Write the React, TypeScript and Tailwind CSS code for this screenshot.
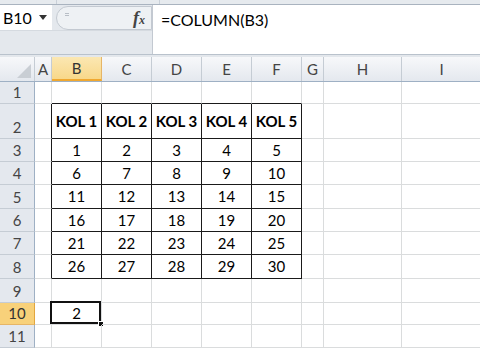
import React from 'react';

const COLS = [
  { name: '', w: 35 },
  { name: 'A', w: 17 },
  { name: 'B', w: 50 },
  { name: 'C', w: 50 },
  { name: 'D', w: 50 },
  { name: 'E', w: 50 },
  { name: 'F', w: 50 },
  { name: 'G', w: 22 },
  { name: 'H', w: 78 },
  { name: 'I', w: 80 },
];

const ROW_H = [22, 35, 23, 23, 24, 23, 23, 24, 24, 22, 23];

const DATA: string[][] = [
  [],
  ['KOL 1', 'KOL 2', 'KOL 3', 'KOL 4', 'KOL 5'],
  ['1', '2', '3', '4', '5'],
  ['6', '7', '8', '9', '10'],
  ['11', '12', '13', '14', '15'],
  ['16', '17', '18', '19', '20'],
  ['21', '22', '23', '24', '25'],
  ['26', '27', '28', '29', '30'],
];

const inTable = (r: number, c: number) => r >= 2 && r <= 8 && c >= 2 && c <= 6;

const Cell: React.FC<{ r: number; c: number; w: number }> = ({ r, c, w }) => {
  const table = inTable(r, c);
  const rightDark = table || (c === 1 && r >= 2 && r <= 8);
  const bottomDark = table || (r === 1 && c >= 2 && c <= 6);
  const text = table ? DATA[r - 1][c - 2] : r === 10 && c === 2 ? '2' : '';
  const selected = r === 10 && c === 2;
  return (
    <div
      className={`relative flex shrink-0 items-center justify-center border-r border-b text-[15px] text-black ${
        rightDark ? 'border-r-[#1a1a1a]' : 'border-r-[#dadcdd]'
      } ${bottomDark ? 'border-b-[#1a1a1a]' : 'border-b-[#dadcdd]'} ${r === 2 ? 'font-bold' : ''}`}
      style={{ width: w }}
    >
      {text}
      {selected && (
        <>
          <div className="absolute -left-[2px] -top-[2px] right-0 bottom-0 border-[2px] border-[#111]" />
          <div className="absolute -right-[3px] -bottom-[3px] h-[6px] w-[6px] border border-white bg-[#111]" />
        </>
      )}
    </div>
  );
};

export default function App() {
  return (
    <div
      className="w-[480px] h-[351px] overflow-hidden bg-white"
      style={{ fontFamily: 'Lato, "Open Sans", sans-serif' }}
    >
      <div className="flex h-[5px] border-b border-[#a9b3bf] bg-[#e6eaee]">
        <div className="w-[57px] border-r border-[#c9d0d8]" />
        <div className="w-[103px] border-r border-[#c9d0d8]" />
        <div className="flex-1" />
      </div>
      <div className="flex h-[49px]">
        <div className="flex w-[152px] flex-col bg-[#e4e8ed]">
          <div className="flex h-[25px] items-center">
            <div className="flex h-full w-[52px] items-center justify-between bg-white pl-[3px] pr-[5px] text-[16px] text-black">
              <span>B10</span>
              <svg width="8" height="5" viewBox="0 0 8 5">
                <path d="M0 0h8L4 5z" fill="#333" />
              </svg>
            </div>
            <div className="ml-[4px] flex h-[24px] w-[96px] items-center justify-between rounded-l-full border border-[#c3c9d1] bg-[#eef1f4] pl-[8px] pr-[6px]">
              <span className="mb-[6px] h-[3px] w-[4px] border-t border-b border-[#b8bec6]" />
              <span
                className="text-[18px] font-bold italic leading-none text-[#444]"
                style={{ fontFamily: '"Liberation Serif", serif' }}
              >
                f<span className="text-[12px]">x</span>
              </span>
            </div>
          </div>
          <div className="flex-1 border-t border-[#d5dae0]" />
        </div>
        <div className="flex-1 border-l border-[#c3c9d1] bg-white pl-[8px] pt-[3px] text-[16px] text-black">
          =COLUMN(B3)
        </div>
      </div>
      <div className="h-[3px] border-t border-[#b9c2cc] bg-[#e3e7ec]" />
      <div className="flex h-[25px] border-b border-[#9eb0c4] bg-gradient-to-b from-[#f7f8fa] to-[#e4e8ee]">
        {COLS.map((col, i) =>
          i === 0 ? (
            <div key={i} className="relative shrink-0 border-r border-[#c5ccd4]" style={{ width: col.w }}>
              <svg className="absolute right-[3px] bottom-[3px]" width="14" height="14" viewBox="0 0 14 14">
                <path d="M14 0V14H0z" fill="#c9ced4" />
              </svg>
            </div>
          ) : (
            <div
              key={i}
              className={`flex shrink-0 items-center justify-center border-r text-[15px] ${
                col.name === 'B'
                  ? 'border-r-[#e6b566] border-b-2 border-b-[#f0a830] bg-gradient-to-b from-[#fbe7b2] to-[#f8d88a] text-[#333]'
                  : 'border-r-[#c5ccd4] text-[#444]'
              }`}
              style={{ width: col.w }}
            >
              {col.name}
            </div>
          )
        )}
      </div>
      {ROW_H.map((h, ri) => {
        const r = ri + 1;
        return (
          <div key={r} className="flex" style={{ height: h }}>
            <div
              className={`flex shrink-0 items-end justify-center border-r border-b pb-[1px] text-[15px] leading-[20px] ${
                r === 10
                  ? 'border-r-[#e2a63e] border-b-[#e6b566] bg-[#f8d17a] text-[#333]'
                  : 'border-r-[#9eb0c4] border-b-[#c5ccd4] bg-[#e4e8ee] text-[#444]'
              }`}
              style={{ width: 35 }}
            >
              {r}
            </div>
            {COLS.slice(1).map((col, ci) => (
              <Cell key={ci} r={r} c={ci + 1} w={col.w} />
            ))}
          </div>
        );
      })}
    </div>
  );
}
